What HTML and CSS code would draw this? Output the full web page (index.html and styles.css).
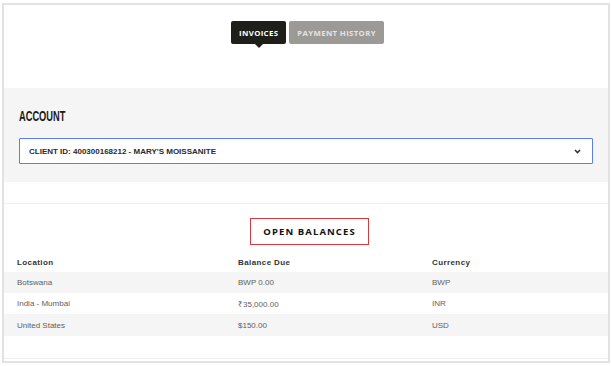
FILE: index.html
```html
<!DOCTYPE html>
<html>
<head>
<meta charset="utf-8">
<link rel="stylesheet" href="styles.css">
</head>
<body>
<div class="frame">
  <div class="tabs-area">
    <div class="tabs">
      <div class="tab active">INVOICES</div>
      <div class="tab">PAYMENT HISTORY</div>
    </div>
  </div>
  <section class="account">
    <h2 class="account-title"><span>ACCOUNT</span></h2>
    <div class="select">
      <span class="select-text">CLIENT ID: 400300168212 - MARY'S MOISSANITE</span>
      <svg class="chevron" width="7" height="5" viewBox="0 0 7 5"><path d="M1 1 L3.5 3.5 L6 1" fill="none" stroke="#333" stroke-width="1.6"/></svg>
    </div>
  </section>
  <div class="divider"></div>
  <div class="balances-head">
    <h3 class="balances-title">OPEN BALANCES</h3>
  </div>
  <table class="balances">
    <colgroup><col class="c1"><col class="c2"><col class="c3"></colgroup>
    <thead>
      <tr><th>Location</th><th>Balance Due</th><th>Currency</th></tr>
    </thead>
    <tbody>
      <tr class="alt"><td>Botswana</td><td>BWP 0.00</td><td>BWP</td></tr>
      <tr><td>India - Mumbai</td><td>₹35,000.00</td><td>INR</td></tr>
      <tr class="alt"><td>United States</td><td>$150.00</td><td>USD</td></tr>
    </tbody>
  </table>
  <div class="divider bottom"></div>
</div>
</body>
</html>
```
FILE: styles.css
```css
* { box-sizing: border-box; }
html, body { margin: 0; padding: 0; background: #fff; }
body { font-family: "Liberation Sans", Arial, sans-serif; }

.frame {
  margin: 3px 2px 0 2px;
  width: 608px;
  height: 360px;
  border: 2px solid #e2e2e2;
  background: #fff;
  display: flex;
  flex-direction: column;
}

.tabs-area {
  height: 83px;
  padding-top: 16px;
  display: flex;
  justify-content: center;
}
.tabs { display: flex; gap: 3px; height: 23px; margin-left: 3px; }
.tab {
  position: relative;
  height: 23px;
  padding: 0 8px;
  display: flex;
  align-items: center;
  font-family: "Open Sans", sans-serif;
  font-weight: 700;
  font-size: 7.8px;
  letter-spacing: 0.35px;
  color: #e4e4e2;
  background: #9b9a96;
  border-radius: 2px;
}
.tab.active { background: #1e1e1a; color: #fff; }
.tab.active::after {
  content: "";
  position: absolute;
  left: 50%;
  bottom: -4px;
  margin-left: -4px;
  border-left: 4px solid transparent;
  border-right: 4px solid transparent;
  border-top: 4px solid #1e1e1a;
}

.account {
  background: #f5f5f5;
  height: 94px;
  padding: 20px 15px 0 15px;
}
.account-title {
  margin: 0 0 14px 0;
  height: 16px;
  line-height: 16px;
  font-size: 14.5px;
  font-weight: 700;
  color: #1a1a1a;
}
.account-title span {
  display: inline-block;
  transform: scaleX(0.64);
  transform-origin: left center;
  margin-left: 0;
}
.select {
  height: 26px;
  background: #fff;
  border: 1.5px solid #5c7df2;
  border-radius: 1px;
  display: flex;
  align-items: center;
  justify-content: space-between;
  padding: 0 11px 0 9px;
}
.select-text {
  font-weight: 700;
  font-size: 8px;
  color: #2a2a2a;
}
.chevron { display: block; }

.divider {
  margin-top: 21px;
  height: 1px;
  background: #f0f0f0;
}

.balances-head {
  display: flex;
  justify-content: center;
  padding-top: 14px;
}
.balances-title {
  margin: 0 0 0 7px;
  width: 119px;
  height: 27px;
  border: 1.2px solid #d9393d;
  display: flex;
  align-items: center;
  justify-content: center;
  font-family: "Open Sans", sans-serif;
  font-weight: 700;
  font-size: 9.5px;
  letter-spacing: 1.1px;
  color: #111;
}

.balances {
  margin-top: 8px;
  width: 100%;
  border-collapse: collapse;
}
.c1 { width: 234px; }
.c2 { width: 194px; }
.balances th {
  height: 19px;
  text-align: left;
  font-weight: 700;
  font-size: 8px;
  letter-spacing: 0.4px;
  color: #333;
  padding: 0;
}
.balances td {
  height: 21px;
  font-size: 8px;
  color: #606060;
  padding: 0;
}
.balances th:first-child, .balances td:first-child { padding-left: 13px; }
.balances tr.alt td { background: #f5f5f5; }
.balances tbody tr:last-child td { height: 22px; }

.divider.bottom {
  margin-top: auto;
  margin-bottom: 2px;
}
```
